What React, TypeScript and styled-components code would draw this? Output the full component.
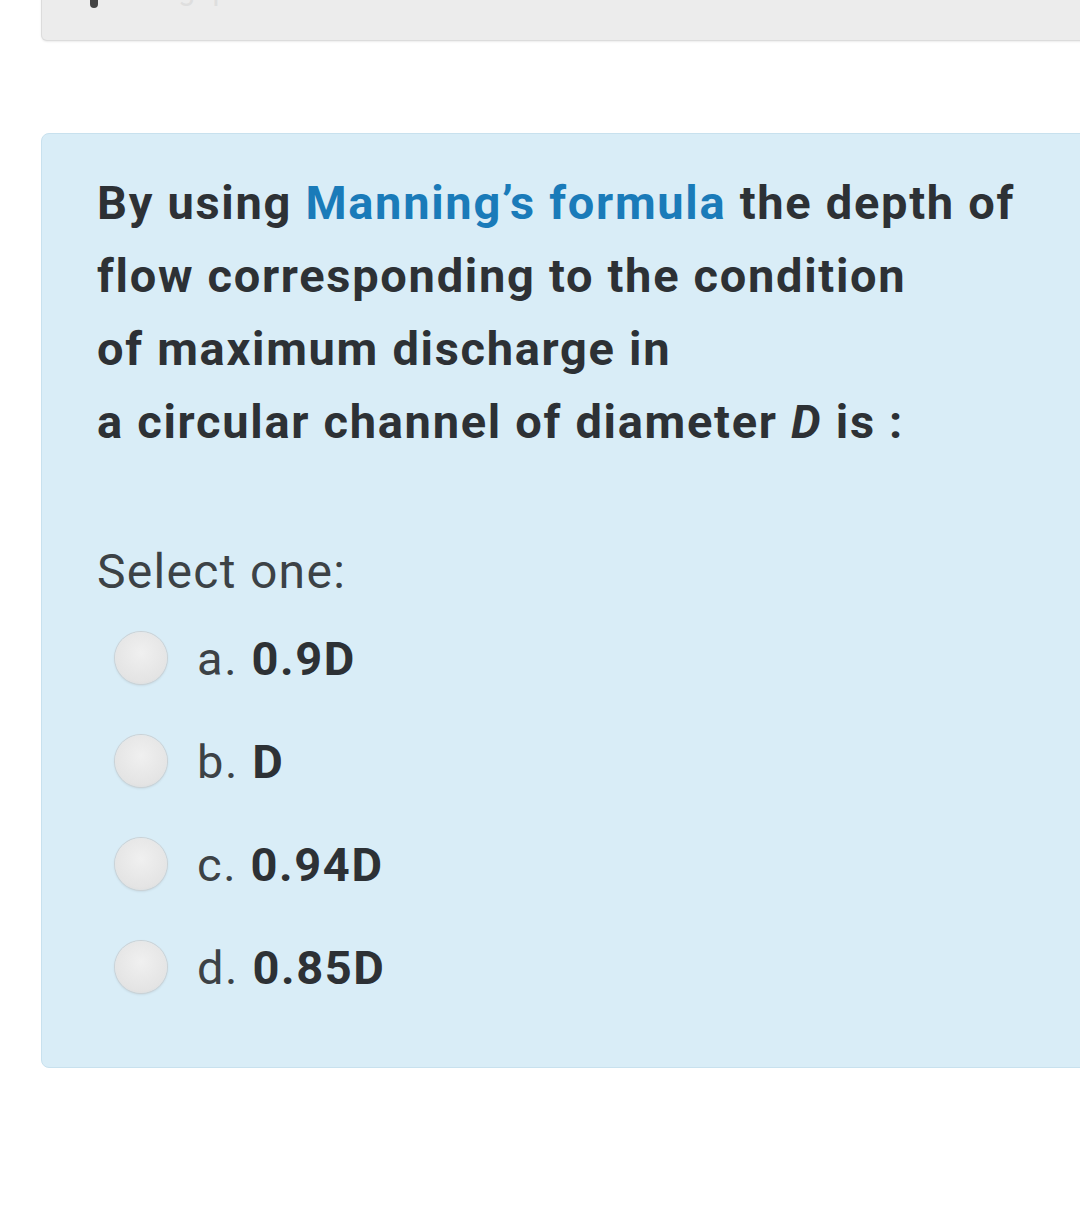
import styled, { createGlobalStyle } from "styled-components";

const GlobalStyle = createGlobalStyle`
    html, body {
        margin: 0;
        padding: 0;
        background: #ffffff;
    }
    body {
        font-family: Roboto, "Liberation Sans", sans-serif;
        overflow: hidden;
    }
`;

const Page = styled.div`
    width: 1080px;
    height: 1228px;
    overflow: hidden;
    padding-left: 41px;
    box-sizing: border-box;
`;

const InfoBar = styled.div`
    margin-top: -30px;
    margin-right: -20px;
    height: 71px;
    background-color: #ececec;
    border: 1px solid #dcdcdc;
    border-top: none;
    border-radius: 0 0 6px 6px;
    box-shadow: 0 1px 2px rgba(0, 0, 0, 0.08);
    display: flex;
    align-items: flex-start;
    gap: 40px;
    padding-left: 48px;
    box-sizing: border-box;
    overflow: hidden;
`;

const InfoMark = styled.span`
    width: 8px;
    height: 14px;
    margin-top: 24px;
    border-radius: 0 0 4px 4px;
    background-color: #444;
`;

const InfoText = styled.span`
    margin-top: 2px;
    font-size: 30px;
    color: #dedede;
`;

const QuestionCard = styled.div`
    margin-top: 92px;
    margin-right: -20px;
    height: 935px;
    box-sizing: border-box;
    background-color: #d9edf7;
    border: 1px solid #c8e1ee;
    border-radius: 8px;
    padding: 32px 40px 0 55px;
    color: #2d3135;
`;

const QuestionText = styled.p`
    margin: 0;
    font-size: 47px;
    font-weight: 700;
    line-height: 73px;
    letter-spacing: 1.7px;
`;

const Highlight = styled.span`
    color: #1a7bb9;
`;

const SelectLabel = styled.div`
    margin-top: 84px;
    font-size: 48px;
    line-height: 60px;
    color: #3c4246;
    letter-spacing: 1.3px;
`;

const OptionList = styled.div`
    margin-top: 30px;
    display: flex;
    flex-direction: column;
    gap: 51px;
`;

const OptionRow = styled.label`
    display: flex;
    align-items: center;
    gap: 30px;
    padding-left: 18px;
    height: 52px;
`;

const Radio = styled.span`
    width: 52px;
    height: 52px;
    flex-shrink: 0;
    border-radius: 50%;
    background: radial-gradient(circle at 50% 40%, #f0f0f0 0%, #e4e4e4 70%, #d4d4d4 100%);
    box-shadow: 0 0 0 1px #cbd2d6, 0 1px 3px rgba(0, 0, 0, 0.15);
`;

const OptionText = styled.span`
    font-size: 47px;
    color: #3c4246;
    letter-spacing: 1.6px;
`;

const OptionValue = styled.b`
    font-weight: 700;
    color: #2d3135;
`;

const options = [
    { key: "a", value: "0.9D" },
    { key: "b", value: "D" },
    { key: "c", value: "0.94D" },
    { key: "d", value: "0.85D" },
];

export default function App() {
    return (
        <Page>
            <GlobalStyle />
            <InfoBar>
                <InfoMark />
                <InfoText>Flag question</InfoText>
            </InfoBar>
            <QuestionCard>
                <QuestionText>
                    By using <Highlight>Manning’s formula</Highlight> the depth of
                    <br />
                    flow corresponding to the condition
                    <br />
                    of maximum discharge in
                    <br />
                    a circular channel of diameter <i>D</i> is :
                </QuestionText>
                <SelectLabel>Select one:</SelectLabel>
                <OptionList>
                    {options.map((o) => (
                        <OptionRow key={o.key}>
                            <Radio />
                            <OptionText>
                                {o.key}. <OptionValue>{o.value}</OptionValue>
                            </OptionText>
                        </OptionRow>
                    ))}
                </OptionList>
            </QuestionCard>
        </Page>
    );
}
